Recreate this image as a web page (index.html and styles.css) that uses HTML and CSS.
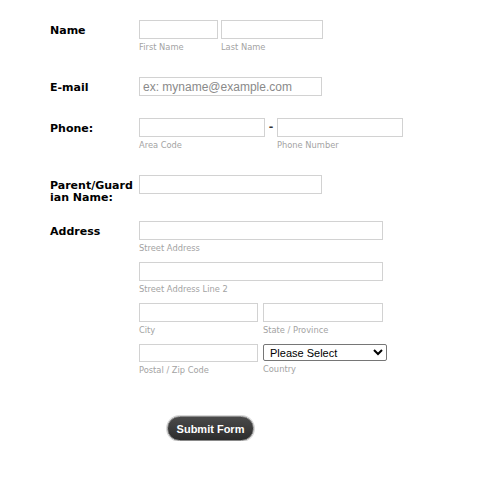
FILE: index.html
```html
<!DOCTYPE html>
<html>
<head>
<meta charset="utf-8">
<link rel="stylesheet" href="styles.css">
</head>
<body>
<form class="form">
  <div class="row row-name">
    <label class="label">Name</label>
    <div class="fields">
      <div class="field"><input class="input w-first" type="text"><span class="sub">First Name</span></div>
      <div class="field"><input class="input w-last" type="text"><span class="sub">Last Name</span></div>
    </div>
  </div>

  <div class="row row-email">
    <label class="label">E-mail</label>
    <div class="fields">
      <input class="input w-wide" type="text" placeholder="ex: myname@example.com">
    </div>
  </div>

  <div class="row row-phone">
    <label class="label">Phone:</label>
    <div class="fields">
      <div class="field"><input class="input w-phone" type="text"><span class="sub">Area Code</span></div>
      <span class="dash">-</span>
      <div class="field"><input class="input w-phone" type="text"><span class="sub">Phone Number</span></div>
    </div>
  </div>

  <div class="row row-parent">
    <label class="label label-wrap">Parent/Guardian Name:</label>
    <div class="fields">
      <input class="input w-wide" type="text">
    </div>
  </div>

  <div class="row row-address">
    <label class="label">Address</label>
    <div class="address">
      <div class="field"><input class="input w-street" type="text"><span class="sub">Street Address</span></div>
      <div class="field"><input class="input w-street" type="text"><span class="sub">Street Address Line 2</span></div>
      <div class="pair">
        <div class="field"><input class="input w-city" type="text"><span class="sub">City</span></div>
        <div class="field"><input class="input w-state" type="text"><span class="sub">State / Province</span></div>
      </div>
      <div class="pair">
        <div class="field"><input class="input w-city input-zip" type="text"><span class="sub">Postal / Zip Code</span></div>
        <div class="field">
          <select class="select">
            <option>Please Select</option>
            <option>United States</option>
            <option>Canada</option>
          </select>
          <span class="sub sub-country">Country</span>
        </div>
      </div>
    </div>
  </div>

  <div class="row-submit">
    <button class="submit" type="button">Submit Form</button>
  </div>
</form>
</body>
</html>
```

FILE: styles.css
```css
html, body {
  margin: 0;
  padding: 0;
  background: #ffffff;
}

body {
  font-family: "DejaVu Sans", Verdana, sans-serif;
  color: #000;
}

.form {
  padding: 20px 0 0 50px;
}

.row {
  display: flex;
  align-items: flex-start;
}

.row-name { margin-bottom: 25px; }
.row-email { margin-bottom: 22px; }
.row-phone { margin-bottom: 25px; }
.row-parent { margin-bottom: 18px; }

.label {
  width: 85px;
  margin-right: 4px;
  padding-top: 5px;
  font-size: 11px;
  line-height: 11.5px;
  font-weight: bold;
  flex-shrink: 0;
}

.label-wrap {
  word-break: break-all;
}

.fields {
  display: flex;
  align-items: flex-start;
  gap: 3px;
}

.field {
  display: flex;
  flex-direction: column;
}

.input {
  box-sizing: border-box;
  height: 19px;
  margin: 0;
  padding: 0 3px;
  border: 1px solid #d2d2d2;
  background: #fff;
  font-family: "Liberation Sans", Arial, sans-serif;
  font-size: 12px;
  color: #333;
  outline: none;
}

.input::placeholder {
  color: #8a8a8a;
}

.input-zip {
  height: 18px;
}

.w-first { width: 79px; }
.w-last { width: 102px; }
.w-wide { width: 183px; }
.w-phone { width: 126px; }
.w-street { width: 244px; }
.w-city { width: 119px; }
.w-state { width: 120px; }

.sub {
  display: block;
  margin-top: 3px;
  font-size: 8.3px;
  line-height: 10px;
  color: #a3a3a3;
  white-space: nowrap;
}

.sub-country {
  margin-top: 3px;
}

.dash {
  width: 6px;
  padding-top: 3px;
  font-size: 11px;
  font-weight: bold;
  line-height: 12px;
  color: #333;
  text-align: center;
}

.row-phone .fields {
  gap: 3px;
}

.address {
  display: flex;
  flex-direction: column;
  gap: 9px;
}

.pair {
  display: flex;
  align-items: flex-start;
  gap: 5px;
}

.select {
  box-sizing: border-box;
  width: 124px;
  height: 17px;
  margin: 0;
  padding: 0 2px;
  border: 1px solid #767676;
  border-radius: 2px;
  background: #fff;
  font-family: "Liberation Sans", Arial, sans-serif;
  font-size: 11px;
  color: #000;
}

.row-submit {
  margin-top: 41px;
  padding-left: 117px;
}

.submit {
  box-sizing: border-box;
  width: 87px;
  height: 25px;
  padding: 0;
  border: 1px solid #8a8a8a;
  border-radius: 13px;
  background: linear-gradient(#4a4a4a, #2c2c2c);
  color: #fff;
  font-family: "Liberation Sans", Arial, sans-serif;
  font-size: 11px;
  font-weight: bold;
  box-shadow: 0 0 0 1px #d8d8d8;
}
```
